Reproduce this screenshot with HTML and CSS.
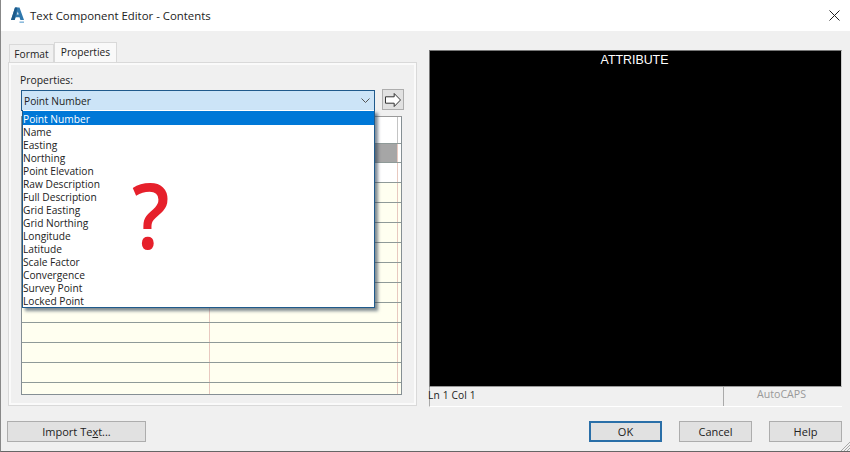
FILE: index.html
```html
<!DOCTYPE html>
<html lang="en">
<head>
<meta charset="utf-8">
<title>Text Component Editor - Contents</title>
<link rel="stylesheet" href="styles.css">
</head>
<body>
<div class="dialog">
  <header class="titlebar">
    <svg class="app-icon" width="15" height="17" viewBox="0 0 15 17"><path d="M5 .5h4.5L14 13h-3.6l-.9-2.8H5.8L4.6 13H1z" fill="#2f78ad"/><path d="M5 .5h2.3L4.6 13H1z" fill="#1d5a8a"/><path d="M6.8 7.6h1.9l-.9-3z" fill="#eaf2f8"/><rect x="9.5" y="14.4" width="4.5" height="1.6" fill="#8dbbdc"/></svg>
    <span class="title">Text Component Editor - Contents</span>
    <svg class="close" width="11" height="11" viewBox="0 0 11 11"><path d="M.5.5l10 10M10.5.5l-10 10" stroke="#222" stroke-width="1" fill="none"/></svg>
  </header>
  <main class="content">
    <section class="left">
      <div class="tabs">
        <div class="tab">Format</div>
        <div class="tab active">Properties</div>
      </div>
      <div class="panel">
        <div class="label">Properties:</div>
        <div class="combo-row">
          <div class="combo">
            <span>Point Number</span>
            <svg width="9" height="5" viewBox="0 0 9 5"><path d="M.5.5l4 4 4-4" stroke="#555" fill="none"/></svg>
          </div>
          <button class="arrow-btn"><svg width="16" height="14" viewBox="0 0 16 14"><path d="M.5 3.8h8.7V.5L15.5 7l-6.3 6.5v-3.3H.5z" fill="#fff" stroke="#333"/></svg></button>
        </div>
        <div class="grid">
          <div class="grid-row top"><i></i><i></i><i></i></div>
          <div class="grid-row head"><i></i><i></i><i></i></div>
          <div class="grid-row white"><i></i><i></i><i></i></div>
          <div class="grid-row"><i></i><i></i><i></i></div>
          <div class="grid-row"><i></i><i></i><i></i></div>
          <div class="grid-row"><i></i><i></i><i></i></div>
          <div class="grid-row"><i></i><i></i><i></i></div>
          <div class="grid-row"><i></i><i></i><i></i></div>
          <div class="grid-row"><i></i><i></i><i></i></div>
          <div class="grid-row"><i></i><i></i><i></i></div>
          <div class="grid-row"><i></i><i></i><i></i></div>
          <div class="grid-row"><i></i><i></i><i></i></div>
          <div class="grid-row"><i></i><i></i><i></i></div>
          <div class="grid-row last"><i></i><i></i><i></i></div>
        </div>
        <ul class="dropdown">
          <li class="selected">Point Number</li>
          <li>Name</li>
          <li>Easting</li>
          <li>Northing</li>
          <li>Point Elevation</li>
          <li>Raw Description</li>
          <li>Full Description</li>
          <li>Grid Easting</li>
          <li>Grid Northing</li>
          <li>Longitude</li>
          <li>Latitude</li>
          <li>Scale Factor</li>
          <li>Convergence</li>
          <li>Survey Point</li>
          <li>Locked Point</li>
        </ul>
        <span class="question">?</span>
      </div>
    </section>
    <section class="right">
      <div class="editor">ATTRIBUTE</div>
      <div class="status">
        <span class="pos">Ln 1 Col 1</span>
        <span class="caps">AutoCAPS</span>
      </div>
    </section>
  </main>
  <footer class="footer">
    <button class="btn import">Import Te<u>x</u>t...</button>
    <button class="btn ok">OK</button>
    <button class="btn">Cancel</button>
    <button class="btn">Help</button>
  </footer>
  <svg class="grip" width="10" height="10" viewBox="0 0 10 10"><path d="M10 1L1 10M10 4L4 10M10 7L7 10" stroke="#a8a8a8" fill="none"/></svg>
</div>
</body>
</html>
```
FILE: styles.css
```css
* { box-sizing: border-box; }
html, body { margin: 0; padding: 0; }
body { width: 850px; height: 452px; overflow: hidden; font-family: "Open Sans", "Noto Sans", sans-serif; font-size: 10.2px; color: #222; }
.dialog { position: relative; width: 850px; height: 452px; background: #f0f0f0; display: flex; flex-direction: column; border-bottom: 1px solid #666; border-left: 1px solid #888; }
.titlebar { height: 31px; background: #fff; display: flex; align-items: center; padding: 0 10px 0 9px; flex: none; }
.app-icon { margin-right: 5px; margin-top: -1px; }
.title { font-size: 11.4px; flex: 1; color: #222; }
.content { display: flex; height: 376px; flex: none; padding: 0 0 0 7px; }
.left { width: 409px; padding-top: 11px; display: flex; flex-direction: column; }
.tabs { display: flex; height: 20px; align-items: flex-end; padding-left: 1px; flex: none; }
.tab { height: 18px; width: 45px; border: 1px solid #d9d9d9; border-bottom: 0; text-align: center; line-height: 18px; background: #f0f0f0; }
.tab.active { height: 20px; width: 63px; background: #f9f9f9; line-height: 19px; }
.panel { position: relative; height: 344px; border: 1px solid #d9d9d9; box-shadow: inset 0 0 0 2px #fafafa; padding: 11px 0 0 12px; }
.label { height: 16px; line-height: 13px; font-size: 10.4px; margin-left: -1px; }
.combo-row { display: flex; gap: 7px; height: 21px; }
.combo { width: 354px; height: 21px; background: #cce4f7; border: 1px solid #1f5a8c; display: flex; align-items: center; justify-content: space-between; padding: 0 4px 0 2px; }
.arrow-btn { width: 22px; height: 21px; margin-top: -1px; padding: 0; background: #e1e1e1; border: 1px solid #adadad; display: flex; align-items: center; justify-content: center; }
.grid { width: 381px; height: 279px; margin-top: 5px; border: 1px solid #858f94; border-top-color: #9a9a9a; background: #fffff0; overflow: hidden; }
.grid-row { display: grid; grid-template-columns: 188px 188px 1fr; height: 20px; border-bottom: 1px solid #8f9a98; }
.grid-row i { display: block; border-right: 1px solid #e8c9c0; }
.grid-row i:last-child { border-right: 0; }
.grid-row.top { height: 26px; background: #fff; border-bottom: 0; }
.grid-row.top i:nth-child(2) { border-right-color: #c4c4c4; }
.grid-row.head { background: #fff; border-top: 1px solid #8f9a98; height: 20px; }
.grid-row.head i:nth-child(-n+2) { background: #a6a6a6; }
.grid-row.white { background: #fff; }
.grid-row.last { border-bottom: 0; height: 13px; }
.dropdown { position: absolute; left: 13px; top: 47px; width: 353px; height: 198px; margin: 0; padding: 1px 0 0; list-style: none; background: #fff; border: 1px solid #1f5a8c; border-top: 0; box-shadow: 3px 3px 3px rgba(40, 60, 80, .6); }
.dropdown li { height: 13px; line-height: 17px; }
.dropdown li.selected { background: #0078d7; color: #fff; height: 14px; margin-bottom: -1px; }
.question { position: absolute; left: 123px; top: 106px; font-family: "Open Sans", sans-serif; font-weight: 600; font-size: 90px; line-height: 90px; color: #e6202b; transform: scaleX(.92); transform-origin: left center; }
.right { width: 413px; margin-left: 12px; padding-top: 19px; display: flex; flex-direction: column; }
.editor { height: 337px; background: #000; border: 1px solid #777; border-bottom-color: #999; border-right-color: #ccc; color: #fff; text-align: center; font-family: "Liberation Sans", sans-serif; font-size: 12.4px; line-height: 19px; padding-right: 2px; }
.status { height: 20px; display: flex; border-bottom: 1px solid #fff; border-left: 1px solid #aaa; }
.pos { flex: 1; line-height: 14px; padding-top: 1px; margin-left: -2px; letter-spacing: .15px; }
.caps { width: 119px; border-left: 1px solid #aaa; text-align: center; color: #999; font-size: 10.6px; line-height: 14px; padding-right: 3px; }
.footer { display: flex; padding: 14px 8px 0 6px; gap: 17px; flex: 1; font-size: 11px; }
.btn { width: 73px; height: 21px; background: #e1e1e1; border: 1px solid #adadad; font: inherit; color: #222; padding: 0; }
.btn.import { width: 139px; margin-right: auto; }
.btn.ok { border: 2px solid #2a6fa8; }
.grip { position: absolute; right: 0; bottom: 0; }
```
